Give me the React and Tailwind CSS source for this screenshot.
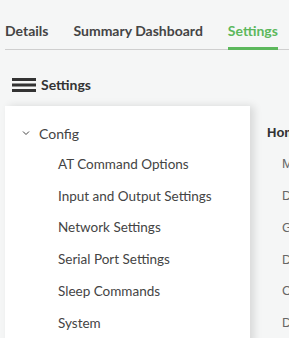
export default function App() {
  const items = [
    "AT Command Options",
    "Input and Output Settings",
    "Network Settings",
    "Serial Port Settings",
    "Sleep Commands",
    "System",
  ];
  const right = ["M", "D", "G", "D", "C", "D", "C"];

  return (
    <div className="w-[289px] h-[338px] overflow-hidden bg-[#f5f6f6] text-[#444] font-['Lato',sans-serif]">
      {/* Tabs */}
      <div className="ml-[5px] mt-[19px] flex items-end border-b border-[#cfcfcf] h-[31px]">
        <div className="text-[14px] font-bold pb-[8px] mr-[25px]">Details</div>
        <div className="text-[14px] font-bold pb-[8px] mr-[25px] whitespace-nowrap">Summary Dashboard</div>
        <div className="text-[14px] font-bold pb-[6px] text-[#5cb85c] border-b-[3px] border-[#5cb85c] -mb-px whitespace-nowrap">
          Settings
        </div>
      </div>

      {/* Section header */}
      <div className="flex items-center ml-[12px] mt-[24px] gap-[5px]">
        <svg width="24" height="14" viewBox="0 0 24 14">
          <rect x="0" y="0" width="24" height="3" fill="#333" />
          <rect x="0" y="5.5" width="24" height="3" fill="#333" />
          <rect x="0" y="11" width="24" height="3" fill="#333" />
        </svg>
        <span className="text-[14px] font-bold text-[#333]">Settings</span>
      </div>

      {/* Body */}
      <div className="flex mt-[11px] gap-[17px]">
        <div className="shrink-0 ml-[5px] w-[245px] h-[240px] bg-white shadow-[4px_0_8px_rgba(0,0,0,0.12)] pt-[17px]">
          <div className="flex items-center h-[20px] pl-[17px] gap-[9px] text-[14px]">
            <svg width="8" height="6" viewBox="0 0 8 6">
              <path d="M1 1.5 L4 4.5 L7 1.5" fill="none" stroke="#444" strokeWidth="1" />
            </svg>
            <span>Config</span>
          </div>
          <div className="flex flex-col pl-[53px] text-[13.5px] mt-[5px]">
            {items.map((t) => (
              <div key={t} className="h-[31.8px] flex items-center whitespace-nowrap">
                {t}
              </div>
            ))}
          </div>
        </div>
        <div className="shrink-0 pt-[17px] font-['Liberation_Sans',sans-serif] text-[#333]">
          <div className="h-[20px] flex items-center text-[13px] font-bold whitespace-nowrap">Home</div>
          <div className="flex flex-col pl-[15px] mt-[5px] text-[13px] text-[#666]">
            {right.map((t, i) => (
              <div key={i} className="h-[31.8px] flex items-center">
                {t}
              </div>
            ))}
          </div>
        </div>
      </div>
    </div>
  );
}
